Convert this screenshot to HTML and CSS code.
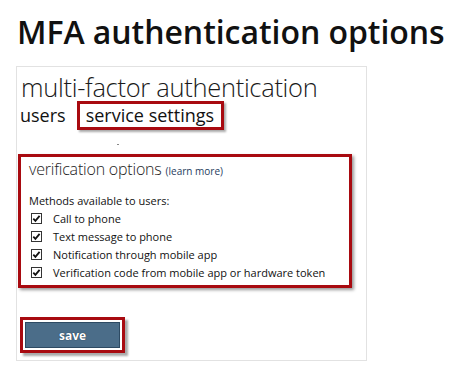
FILE: index.html
```html
<!DOCTYPE html>
<html>
<head>
<meta charset="utf-8">
<link rel="stylesheet" href="styles.css">
</head>
<body>
<h1 class="title">MFA authentication options</h1>
<div class="panel">
  <div class="panel-title">multi-factor authentication</div>
  <div class="tabs">
    <span class="tab">users</span>
    <span class="tab tab-active">service settings</span>
  </div>
  <div class="dot-row"><span class="dot"></span></div>
  <div class="options">
    <div class="options-head">verification options <a class="learn">(learn more)</a></div>
    <div class="methods-label">Methods available to users:</div>
    <ul class="methods">
      <li class="method"><span class="check"><svg viewBox="0 0 11 11" width="11" height="11"><rect x="0.5" y="0.5" width="10" height="10" fill="#fff" stroke="#333"/><path d="M2.3 5.6 L4.4 7.8 L8.6 2.8" fill="none" stroke="#111" stroke-width="1.8"/></svg></span>Call to phone</li>
      <li class="method"><span class="check"><svg viewBox="0 0 11 11" width="11" height="11"><rect x="0.5" y="0.5" width="10" height="10" fill="#fff" stroke="#333"/><path d="M2.3 5.6 L4.4 7.8 L8.6 2.8" fill="none" stroke="#111" stroke-width="1.8"/></svg></span>Text message to phone</li>
      <li class="method"><span class="check"><svg viewBox="0 0 11 11" width="11" height="11"><rect x="0.5" y="0.5" width="10" height="10" fill="#fff" stroke="#333"/><path d="M2.3 5.6 L4.4 7.8 L8.6 2.8" fill="none" stroke="#111" stroke-width="1.8"/></svg></span>Notification through mobile app</li>
      <li class="method"><span class="check"><svg viewBox="0 0 11 11" width="11" height="11"><rect x="0.5" y="0.5" width="10" height="10" fill="#fff" stroke="#333"/><path d="M2.3 5.6 L4.4 7.8 L8.6 2.8" fill="none" stroke="#111" stroke-width="1.8"/></svg></span>Verification code from mobile app or hardware token</li>
    </ul>
  </div>
  <div class="save-wrap"><button class="save">save</button></div>
</div>
</body>
</html>
```
FILE: styles.css
```css
html, body {
  margin: 0;
  padding: 0;
  background: #fff;
}
body {
  font-family: "Open Sans", "Noto Sans", sans-serif;
  color: #222;
}
.title {
  margin: 0;
  padding: 8px 0 0 17px;
  font-family: "Open Sans", sans-serif;
  font-weight: 600;
  font-size: 32px;
  line-height: 48px;
  letter-spacing: -0.05px;
  color: #111;
  height: 66px;
  box-sizing: border-box;
}
.panel {
  margin: 0 0 0 16px;
  width: 351px;
  height: 295px;
  box-sizing: border-box;
  border: 1px solid #e2e2e2;
  padding: 6px 0 0 3px;
}
.panel-title {
  font-family: "Open Sans", sans-serif;
  font-weight: 300;
  font-size: 25.5px;
  line-height: 28px;
  letter-spacing: -0.3px;
  color: #1a1a1a;
  padding-left: 1px;
}
.tabs {
  display: flex;
  align-items: stretch;
  gap: 11px;
  height: 29px;
  font-size: 18px;
  color: #111;
}
.tab {
  line-height: 23px;
  padding-top: 3px;
}
.tab-active {
  padding: 0 7px 0 6px;
  border: 3px solid #a80a10;
  box-shadow: 2px 2px 2px #aaa;
}
.dot-row {
  height: 24px;
  box-sizing: border-box;
  padding-top: 14px;
}
.dot {
  display: block;
  width: 2px;
  height: 1px;
  background: #888;
  margin-left: 97px;
}
.options {
  width: 334px;
  height: 134px;
  box-sizing: border-box;
  margin-left: -2px;
  border: 3px solid #a80a10;
  box-shadow: 2px 2px 3px #999;
  padding: 0 0 0 8px;
}
.options-head {
  font-weight: 300;
  font-size: 16px;
  line-height: 24px;
  color: #222;
  letter-spacing: -0.2px;
}
.learn {
  font-weight: 400;
  font-size: 10px;
  color: #1f3c60;
  letter-spacing: 0;
}
.methods-label {
  margin-top: 10px;
  font-size: 11px;
  line-height: 16px;
  color: #111;
}
.methods {
  list-style: none;
  margin: 0;
  padding: 0;
}
.method {
  display: flex;
  align-items: center;
  height: 18px;
  font-size: 11px;
  color: #111;
}
.check {
  display: flex;
  width: 11px;
  height: 11px;
  margin: 0 11px 0 2px;
}
.save-wrap {
  margin-top: 29px;
}
.save {
  display: block;
  width: 105px;
  height: 36px;
  padding: 0;
  border: 3px solid #a80a10;
  outline: none;
  background: #4b6d89;
  box-shadow: inset 0 0 0 2px #fff, inset 0 0 0 3px #2d4a63, 3px 3px 2px #aaa;
  color: #fff;
  font-family: "Open Sans", sans-serif;
  font-weight: 700;
  font-size: 12px;
  text-shadow: 0 0 1px #123;
}
```
